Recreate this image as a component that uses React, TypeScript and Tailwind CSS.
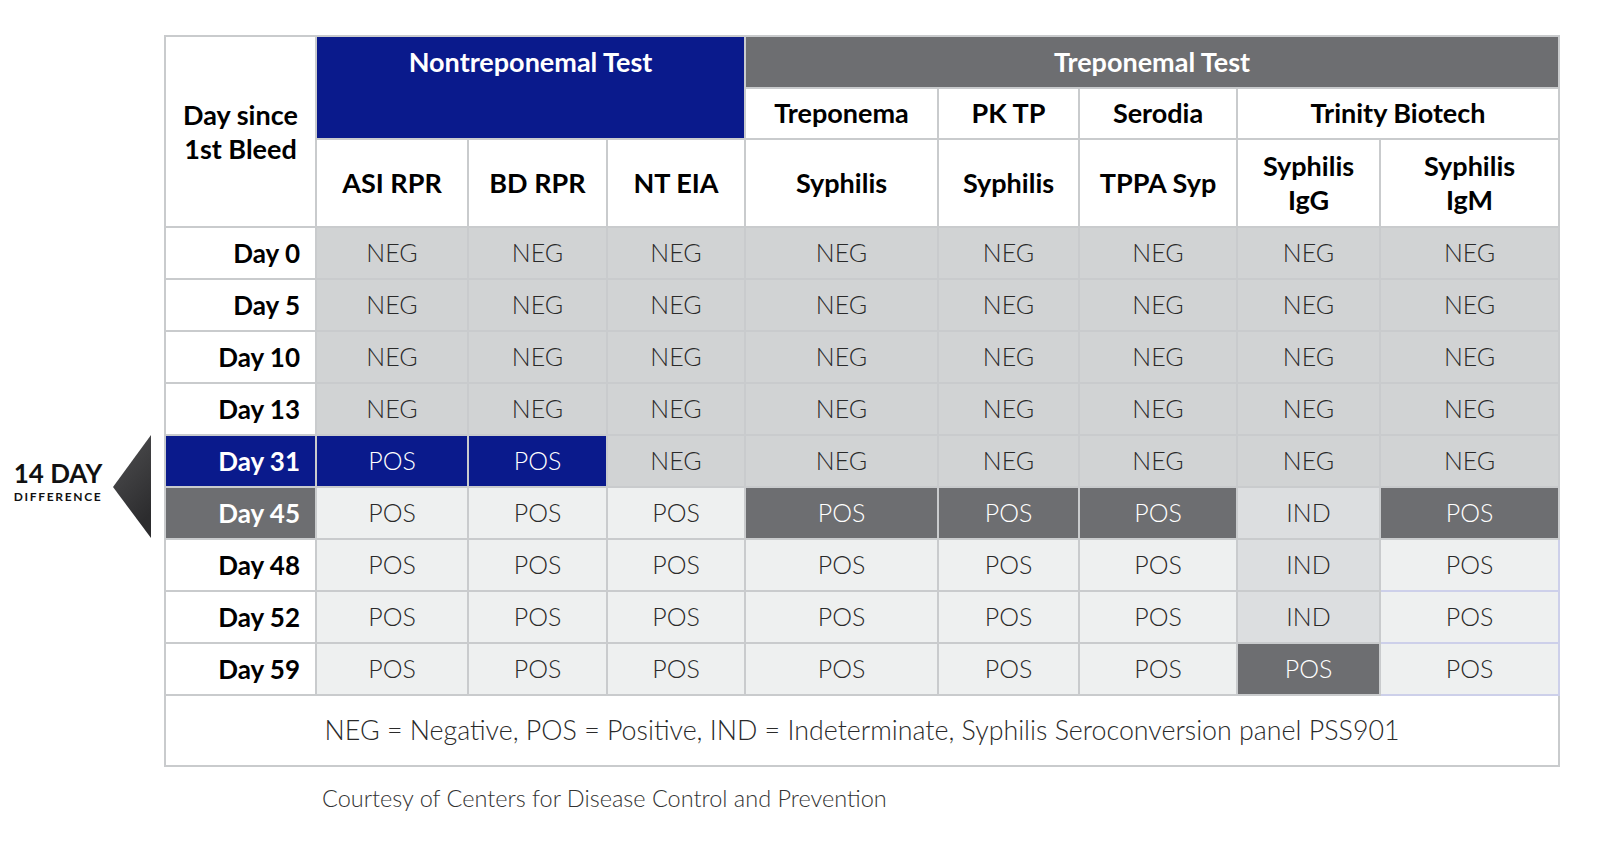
import React from "react";

type Tone = "neg" | "pos" | "ind" | "dark" | "blue";

const toneClass: Record<Tone, string> = {
  neg: "bg-[#d1d3d4] text-[#2a2a2a]",
  pos: "bg-[#eef0f0] text-[#2a2a2a]",
  ind: "bg-[#dcdee0] text-[#2a2a2a]",
  dark: "bg-[#6d6e71] text-white",
  blue: "bg-[#0a1a8c] text-white",
};

const label: Record<Tone, string> = { neg: "NEG", pos: "POS", ind: "IND", dark: "POS", blue: "POS" };

const N: Tone = "neg";
const P: Tone = "pos";

const rows: { day: string; labelTone?: "blue" | "dark"; cells: Tone[] }[] = [
  { day: "Day 0", cells: [N, N, N, N, N, N, N, N] },
  { day: "Day 5", cells: [N, N, N, N, N, N, N, N] },
  { day: "Day 10", cells: [N, N, N, N, N, N, N, N] },
  { day: "Day 13", cells: [N, N, N, N, N, N, N, N] },
  { day: "Day 31", labelTone: "blue", cells: ["blue", "blue", N, N, N, N, N, N] },
  { day: "Day 45", labelTone: "dark", cells: [P, P, P, "dark", "dark", "dark", "ind", "dark"] },
  { day: "Day 48", cells: [P, P, P, P, P, P, "ind", P] },
  { day: "Day 52", cells: [P, P, P, P, P, P, "ind", P] },
  { day: "Day 59", cells: [P, P, P, P, P, P, "dark", P] },
];

const colWidths = [151, 152, 139, 138, 193, 141, 158, 143, 179];

const th = "border-2 border-[#c9cbcd] font-bold text-[27px] text-black text-center align-middle";

export default function App() {
  return (
    <div
      className="w-[1600px] h-[867px] bg-white flex pt-[35px]"
      style={{ fontFamily: "Lato, 'Open Sans', sans-serif" }}
    >
      <div className="w-[164px] shrink-0 pt-[400px] flex items-start">
        <div className="ml-[14px] w-[88px] mt-[25px] flex flex-col items-center">
          <span className="text-[26px] font-bold leading-[27px] text-[#111] whitespace-nowrap">14 DAY</span>
          <span className="text-[12px] font-bold tracking-[0.14em] leading-[16px] text-[#111] mt-[2px] whitespace-nowrap">
            DIFFERENCE
          </span>
        </div>
        <svg width="38" height="103" viewBox="0 0 38 103" className="ml-[11px] shrink-0">
          <defs>
            <linearGradient id="tri" x1="0" y1="0" x2="0.4" y2="1">
              <stop offset="0" stopColor="#505052" />
              <stop offset="1" stopColor="#2c2c2e" />
            </linearGradient>
          </defs>
          <polygon points="0,52 38,0 38,103" fill="url(#tri)" />
        </svg>
      </div>

      <div className="flex flex-col">
        <table className="table-fixed border-collapse w-[1394px] border-2 border-[#c9cbcd]">
          <colgroup>
            {colWidths.map((w, i) => (
              <col key={i} style={{ width: w }} />
            ))}
          </colgroup>
          <thead>
            <tr className="h-[52px]">
              <th rowSpan={3} className={`${th} leading-[34px] bg-white`}>
                Day since
                <br />
                1st Bleed
              </th>
              <th
                colSpan={3}
                rowSpan={2}
                className="border-2 border-[#c9cbcd] bg-[#0a1a8c] text-white font-bold text-[27px] align-top pt-[10px] leading-[30px]"
              >
                Nontreponemal Test
              </th>
              <th colSpan={5} className="border-2 border-[#c9cbcd] bg-[#6d6e71] text-white font-bold text-[27px]">
                Treponemal Test
              </th>
            </tr>
            <tr className="h-[51px]">
              <th className={th}>Treponema</th>
              <th className={th}>PK TP</th>
              <th className={th}>Serodia</th>
              <th colSpan={2} className={th}>
                Trinity Biotech
              </th>
            </tr>
            <tr className="h-[88px]">
              <th className={th}>ASI RPR</th>
              <th className={th}>BD RPR</th>
              <th className={th}>NT EIA</th>
              <th className={th}>Syphilis</th>
              <th className={th}>Syphilis</th>
              <th className={th}>TPPA Syp</th>
              <th className={`${th} leading-[34px]`}>
                Syphilis
                <br />
                IgG
              </th>
              <th className={`${th} leading-[34px]`}>
                Syphilis
                <br />
                IgM
              </th>
            </tr>
          </thead>
          <tbody>
            {rows.map((r, ri) => (
              <tr key={r.day} className="h-[52px]">
                <td
                  className={`border-2 border-[#c9cbcd] text-right pr-[15px] font-bold text-[26px] ${
                    r.labelTone === "blue"
                      ? "bg-[#0a1a8c] text-white"
                      : r.labelTone === "dark"
                        ? "bg-[#6d6e71] text-white"
                        : "bg-white text-black"
                  }`}
                >
                  {r.day}
                </td>
                {r.cells.map((c, ci) => (
                  <td
                    key={ci}
                    className={`border-2 text-center font-light text-[25px] ${toneClass[c]} ${
                      ci === 7 && ri >= 6 ? "border-[#cdd0ea]" : "border-[#c9cbcd]"
                    }`}
                  >
                    {label[c]}
                  </td>
                ))}
              </tr>
            ))}
            <tr className="h-[71px]">
              <td colSpan={9} className="border-2 border-[#c9cbcd] text-center font-light text-[26.8px] text-[#2a2a2a]">
                NEG = Negative, POS = Positive, IND = Indeterminate, Syphilis Seroconversion panel PSS901
              </td>
            </tr>
          </tbody>
        </table>
        <p className="ml-[158px] mt-[14px] font-light text-[23.5px] text-[#333]">
          Courtesy of Centers for Disease Control and Prevention
        </p>
      </div>
    </div>
  );
}
